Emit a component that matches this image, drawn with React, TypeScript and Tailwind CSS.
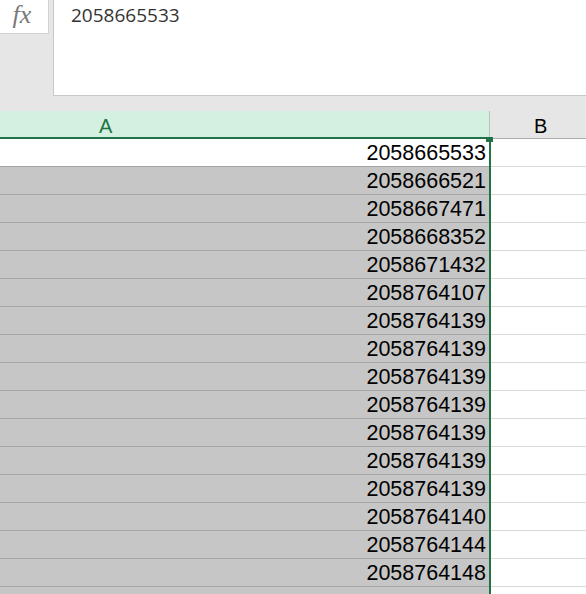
import React from "react";

const values = [
  "2058665533",
  "2058666521",
  "2058667471",
  "2058668352",
  "2058671432",
  "2058764107",
  "2058764139",
  "2058764139",
  "2058764139",
  "2058764139",
  "2058764139",
  "2058764139",
  "2058764139",
  "2058764140",
  "2058764144",
  "2058764148",
  "",
];

export default function App() {
  return (
    <div className="w-[586px] h-[594px] overflow-hidden bg-white font-['Liberation_Sans',Arial,sans-serif]">
      {/* Formula bar */}
      <div className="flex h-[111px] bg-[#e6e6e6]">
        <div className="w-[49px] h-[34px] bg-white border-r border-b border-[#d2d2d2] flex items-center justify-center">
          <span className="font-['Liberation_Serif',serif] italic text-[26px] text-[#7a7a7a] leading-none -mt-1 pr-1">
            fx
          </span>
        </div>
        <div className="ml-[4px] flex-1 h-[96px] bg-white border-l border-b border-[#c8c8c8] pl-[17px] pt-[1px]">
          <span className="font-['Open_Sans',sans-serif] text-[19px] text-[#333333]">
            2058665533
          </span>
        </div>
      </div>

      {/* Column headers */}
      <div className="flex h-[28px]">
        <div className="w-[489px] bg-[#d3f0e0] border-b-2 border-[#217346] pl-[99px] pt-[3px] flex items-center">
          <span className="text-[20px] text-[#217346] leading-none">A</span>
        </div>
        <div className="w-[1px] bg-[#bdbdbd] border-b-2 border-[#217346]" />
        <div className="flex-1 bg-[#e6e6e6] border-b border-[#ababab] flex items-center pl-[44px] pt-[3px]">
          <span className="text-[20px] text-black leading-none">B</span>
        </div>
      </div>

      {/* Rows */}
      <div className="relative">
        {values.map((v, i) => (
          <div key={i} className="flex h-[28px]">
            <div
              className={
                i === 0
                  ? "w-[489px] bg-white border-b border-[#a6a6a6] flex items-center justify-end pr-[3px] pt-[3px]"
                  : "w-[489px] bg-[#c6c6c6] border-b border-[#a6a6a6] flex items-center justify-end pr-[3px] pt-[3px]"
              }
            >
              <span className="text-[21.5px] text-black leading-none">{v}</span>
            </div>
            <div className="w-[2px] bg-[#217346]" />
            <div className="flex-1 border-b border-[#d9d9d9]" />
          </div>
        ))}
        <div className="absolute left-[486px] -top-[2px] w-[7px] h-[5px] bg-[#217346]" />
      </div>
    </div>
  );
}
